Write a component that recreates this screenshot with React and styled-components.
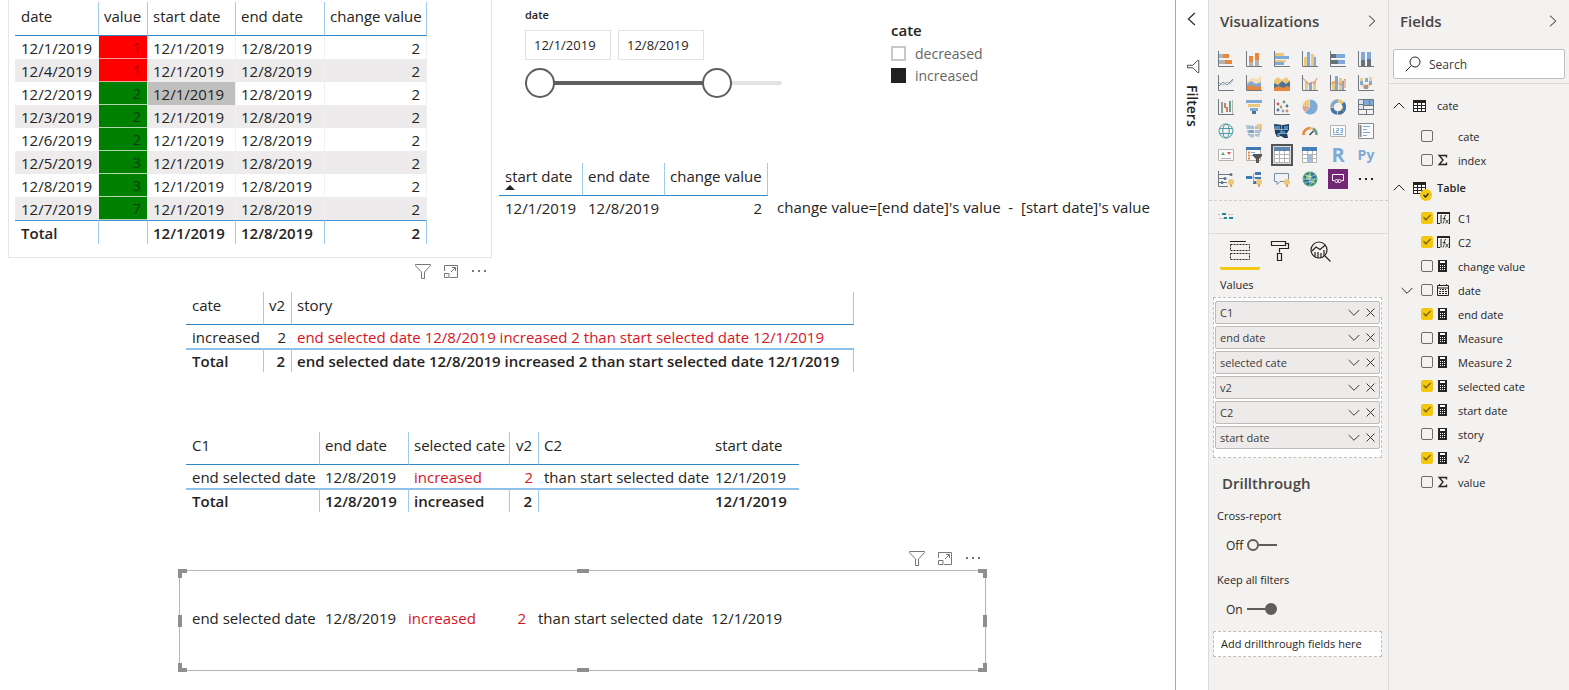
import React, { useState } from "react";
import styled, { createGlobalStyle, css } from "styled-components";

const GlobalStyle = createGlobalStyle`
  *, *::before, *::after { box-sizing: border-box; }
  body { margin: 0; background: #fff; color: #252423; font-family: "Open Sans", "Noto Sans", sans-serif; font-size: 14px; }
  button, input { font: inherit; color: inherit; }
  button { padding: 0; border: 0; background: none; cursor: pointer; }
  h2, h3, p, ul { margin: 0; padding: 0; list-style: none; }
  svg { display: block; }
`;

/* ---------- page frame ---------- */
const Page = styled.div`
  display: flex;
  min-height: 100vh;
`;
const Canvas = styled.main`
  flex: 1;
  min-width: 0;
  display: flex;
  flex-direction: column;
`;
const TopRow = styled.section`
  display: flex;
  padding-left: 8px;
`;
const CardColumn = styled.div`
  flex: none;
  width: 484px;
`;
const Card = styled.div`
  height: 258px;
  padding: 2px 6px 0;
  border: 1px solid #e6e6e6;
  border-top: 0;
`;
const SideColumn = styled.div`
  padding: 8px 0 0 7px;
`;
const Slicers = styled.div`
  display: flex;
  height: 155px;
  padding-left: 26px;
  gap: 109px;
`;
const NoteRow = styled.div`
  display: flex;
  align-items: flex-end;
  gap: 9px;
`;
const Note = styled.p`
  font-size: 15px;
  line-height: 23px;
  white-space: pre;
`;
const Block = styled.section`
  padding: ${(p) => p.$top}px 0 0 186px;
`;

/* ---------- data tables ---------- */
const Table = styled.table`
  table-layout: fixed;
  width: ${(p) => p.$width}px;
  border-collapse: separate;
  border-spacing: 0;
  ${(p) => !p.$plain && css`
    tr > * + * { padding-left: 5px; }
  `}
`;
const HeadCell = styled.th`
  height: ${(p) => p.$h}px;
  padding: 0 6px 6px;
  border-bottom: 1px solid #2f86c9;
  border-right: ${(p) => (p.$open ? 0 : 1)}px solid #9fcbee;
  font-weight: 400;
  font-size: 15px;
  line-height: 18px;
  text-align: ${(p) => (p.$right ? "right" : "left")};
  white-space: nowrap;
`;
const SortMark = styled.span`
  display: block;
  height: 0;
  &::after {
    content: "";
    display: block;
    width: 0;
    border: 5px solid transparent;
    border-top: 0;
    border-bottom-color: #252423;
  }
`;
const tones = {
  red: css`background: #f00; color: #8f0c0c; border-bottom: 1px solid #eda0a0;`,
  green: css`background: #008000; color: #0c3f0c; border-bottom: 1px solid #b0d6b0;`,
  picked: css`background: #bfbfbf;`,
  alert: css`color: #d8141f;`,
};
const Cell = styled.td`
  height: 23px;
  padding: 0 6px;
  border-right: ${(p) => (p.$plain ? 0 : 1)}px solid #f0f0f0;
  font-size: 15px;
  line-height: 20px;
  text-align: ${(p) => (p.$right ? "right" : "left")};
  white-space: nowrap;
  ${(p) => tones[p.$tone]}
`;
const BodyRow = styled.tr`
  background: ${(p) => (p.$shade ? "#edebec" : "transparent")};
`;
const TotalCell = styled(Cell)`
  height: 24px;
  border-top: ${(p) => (p.$thick ? 2 : 1)}px solid ${(p) => (p.$thick ? "#8fc1e8" : "#4a97d6")};
  border-right: ${(p) => (p.$open ? 0 : 1)}px solid #9fcbee;
  font-weight: 600;
`;

function DataTable({ columns, rows, total, striped, headHeight = 33, sorted, thick, plain, label }) {
  const width = columns.reduce((sum, c) => sum + c.width, 0);
  return (
    <Table $width={width} $plain={plain} aria-label={label}>
      <colgroup>
        {columns.map((c, i) => (
          <col key={i} width={c.width} />
        ))}
      </colgroup>
      {!plain && (
        <thead>
          <tr>
            {columns.map((c, i) => (
              <HeadCell key={i} scope="col" $h={headHeight} $right={c.right} $open={c.open}>
                {c.name}
                {sorted === i && <SortMark />}
              </HeadCell>
            ))}
          </tr>
        </thead>
      )}
      <tbody>
        {rows.map((row, r) => (
          <BodyRow key={r} $shade={striped && r % 2 === 1}>
            {row.map((cell, i) => {
              const { text, tone } = typeof cell === "string" ? { text: cell } : cell;
              return (
                <Cell key={i} $right={columns[i].right} $tone={tone} $plain={plain || !striped}>
                  {text}
                </Cell>
              );
            })}
          </BodyRow>
        ))}
      </tbody>
      {total && (
        <tfoot>
          <tr>
            {total.map((text, i) => (
              <TotalCell key={i} $right={columns[i].right} $open={columns[i].open} $thick={thick}>
                {text}
              </TotalCell>
            ))}
          </tr>
        </tfoot>
      )}
    </Table>
  );
}

const mainColumns = [
  { name: "date", width: 84 },
  { name: "value", width: 49, right: true },
  { name: "start date", width: 88 },
  { name: "end date", width: 89 },
  { name: "change value", width: 102, right: true },
];
const mainRows = [
  ["12/1/2019", "1"], ["12/4/2019", "1"], ["12/2/2019", "2"], ["12/3/2019", "2"],
  ["12/6/2019", "2"], ["12/5/2019", "3"], ["12/8/2019", "3"], ["12/7/2019", "7"],
].map(([date, value], i) => [
  date,
  { text: value, tone: value === "1" ? "red" : "green" },
  { text: "12/1/2019", tone: i === 2 ? "picked" : undefined },
  "12/8/2019",
  "2",
]);
const alert = (text) => ({ text, tone: "alert" });

/* ---------- visual toolbar ---------- */
const Toolbar = styled.div`
  display: flex;
  justify-content: flex-end;
  gap: 12px;
  padding-right: 5px;
  height: 16px;
  margin-top: ${(p) => p.$top}px;
  color: #777;
`;
const line = { fill: "none", stroke: "currentColor", strokeWidth: 1 };
const Funnel = () => (
  <svg width="16" height="16" viewBox="0 0 16 16" {...line}><path d="M.5 1.5h15v1.2L9.500 9v6.500H6.500V9L.5 2.700z" /></svg>
);
const Focus = () => (
  <svg width="16" height="16" viewBox="0 0 16 16" {...line}><path d="M1.500 8V2.500h13v12H7M1.500 10.500H6v4H1.500zM8 9l4.500-4.500M9 4.500h3.500V8" /></svg>
);
const Dots = () => (
  <svg width="16" height="16" viewBox="0 0 16 16" fill="currentColor"><path d="M1 7h2v2H1zM7 7h2v2H7zM13 7h2v2h-2z" /></svg>
);
const VisualTools = ({ top }) => (
  <Toolbar $top={top}>
    <button aria-label="Filters"><Funnel /></button>
    <button aria-label="Focus mode"><Focus /></button>
    <button aria-label="More options"><Dots /></button>
  </Toolbar>
);

/* ---------- slicers ---------- */
const DateSlicer = styled.div`
  width: 257px;
`;
const SlicerTitle = styled.h3`
  font-size: 11px;
  font-weight: 600;
  line-height: 14px;
`;
const DateInputs = styled.div`
  display: flex;
  gap: 7px;
  padding-top: 8px;
`;
const DateInput = styled.input`
  width: 86px;
  height: 30px;
  padding: 0 0 0 8px;
  border: 1px solid #e2e2e2;
  font-size: 13px;
`;
const RangeBox = styled.div`
  display: grid;
  height: 30px;
  margin-top: 8px;
  align-items: center;
`;
const RangeTrack = styled.div`
  grid-area: 1 / 1;
  height: 4px;
  border-radius: 2px;
  background: linear-gradient(to right, #605e5c 70%, #e3e3e3 70%);
`;
const Range = styled.input`
  grid-area: 1 / 1;
  appearance: none;
  width: 100%;
  height: 30px;
  margin: 0;
  background: none;
  pointer-events: none;
  &::-webkit-slider-thumb {
    appearance: none;
    width: 30px;
    height: 30px;
    border: 2px solid #605e5c;
    border-radius: 50%;
    background: #fff;
    pointer-events: auto;
  }
`;
const CateSlicer = styled.fieldset`
  margin: 0;
  padding: 10px 0 0;
  border: 0;
`;
const CateLegend = styled.h3`
  font-size: 15px;
  font-weight: 600;
  line-height: 24px;
`;
const CateOption = styled.label`
  display: flex;
  align-items: center;
  gap: 9px;
  height: 22px;
  color: #666;
`;
const SquareBox = styled.input`
  appearance: none;
  width: 15px;
  height: 15px;
  margin: 0;
  border: 2px solid #c8c8c8;
  &:checked { background: #212121; border-color: #212121; }
`;

/* ---------- selected visual ---------- */
const SelectedArea = styled.section`
  width: 807px;
  margin-left: 179px;
`;
const SelectedFrame = styled.div`
  position: relative;
  height: 101px;
  margin-top: 4px;
  padding: 35px 0 0 6px;
  border: 1px solid #b5b5b5;
`;
const Handle = styled.span`
  position: absolute;
  border: 0 solid #8f8f8f;
  ${(p) => ({
    nw: css`left: -2px; top: -2px; width: 9px; height: 9px; border-width: 4px 0 0 4px;`,
    ne: css`right: -2px; top: -2px; width: 9px; height: 9px; border-width: 4px 4px 0 0;`,
    sw: css`left: -2px; bottom: -2px; width: 9px; height: 9px; border-width: 0 0 4px 4px;`,
    se: css`right: -2px; bottom: -2px; width: 9px; height: 9px; border-width: 0 4px 4px 0;`,
    n: css`left: calc(50% - 6px); top: -2px; width: 12px; border-top-width: 4px;`,
    s: css`left: calc(50% - 6px); bottom: -2px; width: 12px; border-top-width: 4px;`,
    w: css`left: -2px; top: calc(50% - 6px); height: 12px; border-left-width: 4px;`,
    e: css`right: -2px; top: calc(50% - 6px); height: 12px; border-left-width: 4px;`,
  })[p.$at]}
`;

/* ---------- side panes ---------- */
const FiltersPane = styled.aside`
  flex: none;
  display: flex;
  flex-direction: column;
  align-items: center;
  width: 33px;
  padding: 12px 1px 0 0;
  border-left: 1px solid #a8a8a8;
`;
const FiltersFunnel = styled.div`
  margin-top: 32px;
  padding-bottom: 4px;
  transform: rotate(90deg);
`;
const FiltersTitle = styled.h2`
  writing-mode: vertical-rl;
  margin-top: 10px;
  font-size: 14px;
  font-weight: 600;
  line-height: 20px;
`;
const Pane = styled.aside`
  flex: none;
  width: ${(p) => p.$width}px;
  border-left: 1px solid #dedcda;
  background: #f3f2f1;
  font-size: 12px;
`;
const PaneHead = styled.header`
  display: flex;
  align-items: center;
  justify-content: space-between;
  height: 42px;
  padding: 0 12px 0 11px;
`;
const PaneTitle = styled.h2`
  font-size: 15px;
  font-weight: 600;
  line-height: 20px;
  color: #484644;
`;
const Chevron = ({ dir, w = 8, h = 12 }) => {
  const d = {
    left: "M7 .7 1.200 6 7 11.300", right: "M1 .7 6.800 6 1 11.300",
    down: "M.7 1 6 6.300 11.300 1", up: "M.7 6.300 6 1l5.300 5.300",
  }[dir];
  const flat = dir === "down" || dir === "up";
  return <svg width={flat ? 12 : w} height={flat ? 7 : h} viewBox={flat ? "0 0 12 7" : "0 0 8 12"} {...line}><path d={d} /></svg>;
};

const IconGrid = styled.div`
  display: grid;
  grid-template-columns: repeat(6, 28px);
  grid-auto-rows: 24px;
  padding: 5px 0 9px 3px;
  border-bottom: 1px dashed #d0cecc;
`;
const VizButton = styled.button`
  display: flex;
  align-items: center;
  justify-content: center;
  ${(p) => p.$active && css`
    width: 22px;
    height: 22px;
    place-self: center;
    border: 2px solid #555;
    background: #dcdcdc;
  `}
`;
const CustomRow = styled.div`
  height: 33px;
  padding: 7px 0 0 9px;
  border-bottom: 1px solid #dedcda;
`;

const O = "#e8873a", Y = "#edc77a", B = "#7fa9d6", G = "#8a8886", D = "#4d7396", GR = "#b5b3b1";
const Axis = () => <path d="M.5 0v15.500H16" fill="none" stroke="#6f7780" />;
const R = ({ x, y, w, h, f }) => <rect x={x} y={y} width={w} height={h} fill={f} />;
const vizIcons = [
  ["Stacked bar chart", <><R x={1} y={3} w={4} h={4} f={GR} /><R x={5} y={3} w={6} h={4} f={O} /><R x={1} y={9} w={6} h={4} f={GR} /><R x={7} y={9} w={7} h={4} f={O} /><Axis /></>],
  ["Stacked column chart", <><R x={3} y={5} w={4} h={7} f={O} /><R x={3} y={11} w={4} h={4} f={GR} /><R x={9} y={2} w={4} h={8} f={O} /><R x={9} y={9} w={4} h={6} f={GR} /><Axis /></>],
  ["Clustered bar chart", <><R x={1} y={2} w={9} h={3} f={Y} /><R x={1} y={5} w={14} h={3} f={B} /><R x={1} y={9} w={11} h={2} f={Y} /><R x={1} y={11} w={9} h={3} f={B} /><Axis /></>],
  ["Clustered column chart", <><R x={2} y={6} w={3} h={9} f={Y} /><R x={5} y={1} w={3} h={14} f={B} /><R x={9} y={3} w={3} h={12} f={Y} /><R x={12} y={6} w={2} h={9} f={B} /><Axis /></>],
  ["100% stacked bar chart", <><R x={1} y={3} w={5} h={4} f="#66717a" /><R x={6} y={3} w={9} h={4} f={B} /><R x={1} y={9} w={7} h={4} f="#66717a" /><R x={8} y={9} w={7} h={4} f={B} /><Axis /></>],
  ["100% stacked column chart", <><R x={3} y={1} w={4} h={9} f={B} /><R x={3} y={9} w={4} h={6} f="#66717a" /><R x={9} y={1} w={4} h={8} f={B} /><R x={9} y={8} w={4} h={7} f="#66717a" /><Axis /></>],
  ["Line chart", <><path d="M1 11l4-4 4 3 6-6" fill="none" stroke="#7c8893" /><path d="M1 8l4 2 4-3 3 2 3-4" fill="none" stroke="#9fb5c9" /><Axis /></>],
  ["Area chart", <><path d="M1 6l5-3 5 1 4-3v9H1z" fill="#f4dcb8" /><path d="M1 9l4-3 5 3 5-2v5H1z" fill={B} /><path d="M1 11l4-1 5 2 5-1v4H1z" fill={O} /><Axis /></>],
  ["Stacked area chart", <><path d="M0 5l4-3 4 3 4-3 4 4v6H0z" fill={Y} /><path d="M0 8l4 2 4-4 4 3 4-3v7H0z" fill={D} /><path d="M0 13l5-2 4 2 4-2 3 1v4H0z" fill={O} /></>],
  ["Line and stacked column chart", <><R x={3} y={6} w={3} h={9} f={Y} /><R x={7} y={8} w={3} h={7} f={B} /><R x={11} y={6} w={3} h={9} f={Y} /><path d="M1 3l5 6 4-2 2 2 3-6" fill="none" stroke="#dd8a68" /><Axis /></>],
  ["Line and clustered column chart", <><R x={2} y={6} w={3} h={9} f={Y} /><R x={5} y={1} w={3} h={14} f={B} /><R x={9} y={3} w={3} h={12} f={Y} /><R x={12} y={6} w={2} h={9} f={B} /><path d="M1 9l5-3 5 4 4-6v9" fill="none" stroke="#dd8a68" /><Axis /></>],
  ["Ribbon chart", <><path d="M2 3h3v5l3 2 3-2V2h3v6l-4 6H6L2 9z" fill={Y} opacity=".8" /><R x={2} y={6} w={3} h={4} f={B} /><R x={7} y={3} w={3} h={4} f={B} /><R x={11} y={6} w={3} h={4} f={B} /><R x={6} y={10} w={4} h={4} f="#a78fa0" /><Axis /></>],
  ["Waterfall chart", <><R x={3} y={3} w={2} h={11} f="#7fa693" /><R x={6} y={4} w={2} h={5} f="#d9756a" /><R x={8} y={8} w={2} h={5} f="#d9756a" /><R x={11} y={2} w={2} h={11} f="#6d9f86" /><R x={14} y={1} w={1} h={14} f={GR} /><Axis /></>],
  ["Funnel chart", <><R x={0} y={1} w={16} h={3} f={B} /><R x={2} y={5} w={12} h={3} f={Y} /><R x={4} y={9} w={8} h={3} f={B} /><R x={6} y={12} w={4} h={3} f={D} /></>],
  ["Scatter chart", <>{[[4, 5, "#c8605a"], [10, 3, "#5f9f80"], [7, 8, "#b0986a"], [13, 7, D], [4, 11, D], [9, 12, B], [13, 12, "#d98a50"]].map(([x, y, f], i) => <circle key={i} cx={x} cy={y} r="1.400" fill={f} />)}<Axis /></>],
  ["Pie chart", <><path d="M8 8V.5A7.500 7.500 0 1 1 3 13.500z" fill={B} /><path d="M7.500 8V.5A7.500 7.500 0 0 0 .8 6z" fill={Y} /><path d="M7.500 8L.6 6.500A7.500 7.500 0 0 0 3 13z" fill="#dd9f92" /></>],
  ["Donut chart", <g fill="none" strokeWidth="3.500"><circle cx="8" cy="8" r="6" stroke={Y} /><path d="M8 2a6 6 0 0 0-6 6" stroke={B} /><path d="M2 9a6 6 0 0 0 5 5M13 4a6 6 0 0 1 0 8" stroke="#3f78b5" /><path d="M13 12a6 6 0 0 1-5 2" stroke={D} /></g>],
  ["Treemap", <><R x={1} y={1} w={5} h={9} f="#dfe5ea" /><R x={6} y={1} w={9} h={6} f={B} /><path d="M.5.5h15v15H.5zM.5 5.500h5M.5 10.500h15M5.500.5v10M5.500 6.500h10M11.500 1v6M8.500 10.500v5" fill="none" stroke="#6f7780" /></>],
  ["Map", <g fill="none" stroke="#4f9aa5"><circle cx="8" cy="8" r="7" /><ellipse cx="8" cy="8" rx="3.200" ry="7" /><path d="M1.500 5.500h13M1.500 10.500h13" /></g>],
  ["Filled map", <><path d="M0 2l9 1 5-1 2 5-2 3-1 4-4-1-3 2-4-3z" fill="#a9bfd2" /><path d="M3 7h5v3H3z" fill="#7fa0bf" /><path d="M11 1h5v5l-4 1z" fill={Y} /><path d="M1 6.500h12M8.500 3v10M3 10.500h9" fill="none" stroke="#f3f2f1" /></>],
  ["Shape map", <><path d="M0 1l9 1 6-1v6l-2 3 1 5h-4l-3-2-4 1-2-4z" fill="#1f3f5f" /><path d="M1 3h5v3H1zM10 3h4v3h-4zM6 8h5v2H6zM3 11h3v2H3z" fill="#4a88c4" /><path d="M0 6.500h14M7.500 2v6M4 10.500h9" stroke="#d6e2ee" strokeWidth=".6" /></>],
  ["Gauge", <g fill="none" strokeWidth="2.600"><path d="M1.500 12A6.600 6.600 0 0 1 8 5" stroke={O} /><path d="M8 5a6.600 6.600 0 0 1 3 1" stroke={Y} /><path d="M11 5.700A6.600 6.600 0 0 1 14.500 12" stroke="#6d9f86" /><path d="M7.500 12l4-4" stroke="#444" strokeWidth="1.500" /></g>],
  ["Card", <><path d="M.5 2.500h15v11H.5z" fill="#fafafa" stroke={GR} /><path d="M3.500 5v4M3 9.500h2M6.500 5.500h2v2h-2v2h2.500M10.500 5.500h2v4h-2M10.500 7.500h2M3 11.500h10" fill="none" stroke={B} /></>],
  ["Multi-row card", <><path d="M.5.500h15v15H.5z" fill="#fafafa" stroke="#85898c" /><path d="M2.500 2v12" stroke={G} strokeWidth="2" /><path d="M5 3.500h7M5 6.500h4M5 9.500h7M5 12.500h4" stroke={B} /></>],
  ["KPI", <><path d="M.5 2.500h15v11H.5z" fill="#fafafa" stroke={GR} /><path d="M3 8l2-3 2 3z" fill="#5f9f80" /><path d="M9 5h4l-2 3z" fill="#c8605a" /><path d="M3 11.500h10" stroke={GR} /></>],
  ["Slicer", <><path d="M.5.5h14v13H.5z" fill="#fafafa" stroke={GR} /><R x={0} y={0} w={15} h={3} f="#3f78b5" /><path d="M2 5.500h2M2 8.500h2M2 11.500h2" stroke={O} strokeWidth="2" /><path d="M5 5.500h4M5 8.500h3" stroke={B} /><path d="M7 7h9v2l-3 3v4h-3v-4L7 9z" fill="#555" /></>],
  ["Table", <><path d="M.5.5h15v15H.5z" fill="#fff" stroke={GR} /><R x={0} y={0} w={16} h={4} f="#5f86b0" /><path d="M5.500 4v12M10.500 4v12M0 7.500h16M0 11.500h16" stroke={GR} /></>],
  ["Matrix", <><path d="M.5.5h14v15H.5z" fill="#fff" stroke={GR} /><R x={0} y={0} w={15} h={4} f="#4a7fb5" /><R x={5} y={8} w={6} h={7} f="#9fc0e0" /><path d="M5.500 4v12M10.500 4v12M0 7.500h15M0 11.500h15" stroke={GR} /></>],
];
const Letter = styled.span`
  color: ${B};
  font-weight: 700;
  font-size: ${(p) => p.$size}px;
  line-height: 20px;
`;
const Bulb = () => <><circle cx="13" cy="11" r="3" fill={Y} /><R x={12} y={13} w={2} h={3} f="#d9a860" /></>;
const lastIcons = [
  ["Key influencers", <><path d="M.5 0v15.500H10M1 3.500h12M1 7.500h6M1 11.500h8" fill="none" stroke="#6f7780" /><circle cx="13" cy="3.500" r="1.500" fill={D} /><circle cx="7" cy="7.500" r="1.500" fill={D} /><circle cx="4" cy="11.500" r="1.500" fill={D} /><Bulb /></>],
  ["Decomposition tree", <><R x={0} y={5} w={6} h={3} f="#3f78b5" /><R x={9} y={1} w={6} h={3} f="#3f78b5" /><R x={9} y={6} w={6} h={2} f="#3f78b5" /><R x={7} y={10} w={4} h={3} f="#3f78b5" /><path d="M6 6.500h3M7.500 2.500v9" fill="none" stroke={B} /><Bulb /></>],
  ["Q&A", <><path d="M.5 2.500h14v8H6l-3 3v-3H.5z" fill="none" stroke="#7390ad" /><Bulb /></>],
  ["ArcGIS maps", <><circle cx="8" cy="8" r="7.500" fill="#4f9f7a" /><circle cx="8" cy="8" r="6" fill="#2a6d9a" /><path d="M4 4l4-1 2 3-3 3-3-1zM9 9l4-1-1 4-3 1z" fill="#8cc07a" /><path d="M1 8h14M8 1v14M3 4c4 2 6 2 10 0M3 12c4-2 6-2 10 0" fill="none" stroke="#dcefe6" strokeWidth=".7" /></>],
];
const PowerApps = styled.span`
  display: flex;
  align-items: center;
  justify-content: center;
  width: 20px;
  height: 20px;
  background: #742774;
`;
const Icon16 = ({ children }) => <svg width="16" height="16" viewBox="0 0 16 16">{children}</svg>;

const Tabs = styled.div`
  display: flex;
  height: 36px;
  padding: 6px 0 0 11px;
`;
const Tab = styled.button`
  display: flex;
  justify-content: center;
  align-items: flex-start;
  width: 40px;
  padding-top: 1px;
  border-bottom: 3px solid ${(p) => (p.$active ? "#f2c811" : "transparent")};
  border-radius: 2px;
`;
const WellTitle = styled.h3`
  padding: 6px 0 4px 11px;
  font-size: 11px;
  font-weight: 400;
  line-height: 17px;
`;
const Well = styled.ul`
  display: flex;
  flex-direction: column;
  gap: 2px;
  margin: 0 6px 0 4px;
  padding: 3px 1px 8px;
  border: 1px dashed #c0bebc;
  background: #fff;
`;
const WellItem = styled.li`
  display: flex;
  align-items: center;
  gap: 6px;
  height: 23px;
  padding: 0 4px;
  border: 1px solid #bebbb8;
  border-radius: 2px;
  background: #edebe9;
  font-size: 11px;
  color: #3b3a39;
`;
const WellName = styled.span`
  flex: 1;
`;
const DrillTitle = styled(PaneTitle)`
  padding: 15px 0 0 13px;
`;
const DrillLabel = styled.h3`
  padding: ${(p) => p.$top}px 0 0 8px;
  font-size: 11px;
  font-weight: 400;
  line-height: 16px;
`;
const SwitchRow = styled.label`
  display: flex;
  align-items: center;
  gap: 4px;
  height: 16px;
  margin: 13px 0 0 17px;
  font-size: 12px;
`;
const Switch = styled.input`
  appearance: none;
  display: flex;
  align-items: center;
  width: 30px;
  height: 12px;
  margin: 0;
  &::before {
    content: "";
    flex: none;
    width: 12px;
    height: 12px;
    border: 2px solid #605e5c;
    border-radius: 50%;
  }
  &::after {
    content: "";
    flex: 1;
    height: 2px;
    background: #605e5c;
  }
  &:checked { flex-direction: row-reverse; }
  &:checked::before { background: #605e5c; }
`;
const DropBox = styled.div`
  margin: 14px 6px 0 4px;
  padding: 0 7px;
  border: 1px dashed #c0bebc;
  background: #fff;
  font-size: 11px;
  line-height: 24px;
`;

/* ---------- fields pane ---------- */
const SearchBar = styled.label`
  display: flex;
  align-items: center;
  gap: 8px;
  height: 30px;
  margin: 7px 4px 4px;
  padding: 0 11px;
  border: 1px solid #c1bfbd;
  border-radius: 2px;
  background: #fff;
`;
const SearchInput = styled.input`
  flex: 1;
  min-width: 0;
  padding: 0;
  border: 0;
  outline: 0;
  background: none;
  font-size: 12px;
  &::placeholder { color: #3b3a39; opacity: 1; }
`;
const Tree = styled.div`
  padding-top: 6px;
  border-top: 1px solid #dedcda;
`;
const Group = styled.button`
  display: flex;
  align-items: center;
  gap: 8px;
  width: 100%;
  height: 34px;
  padding: 0 0 3px 4px;
  font-size: 11px;
  font-weight: ${(p) => (p.$bold ? 600 : 400)};
  text-align: left;
`;
const GroupIcon = styled.span`
  position: relative;
  width: 16px;
`;
const Badge = styled.span`
  position: absolute;
  left: 7px;
  top: 7px;
`;
const FieldRow = styled.li`
  display: grid;
  grid-template-columns: 12px 12px 12px 1fr;
  column-gap: 8px;
  align-items: center;
  height: 24px;
  padding-left: 12px;
`;
const FieldLabel = styled.label`
  grid-column: 2 / -1;
  display: grid;
  grid-template-columns: 12px 14px 1fr;
  column-gap: 4px;
  align-items: center;
  font-size: 11px;
`;
const FieldName = styled.span`
  padding-left: 3px;
  white-space: nowrap;
`;
const Check = styled.input`
  appearance: none;
  display: flex;
  justify-content: center;
  width: 12px;
  height: 12px;
  margin: 0;
  border: 1px solid #6f6d6b;
  border-radius: 2px;
  &:checked { border-color: #f2c811; background: #f2c811; }
  &:checked::after {
    content: "";
    width: 4px;
    height: 7px;
    border: solid #5c4a00;
    border-width: 0 1px 1px 0;
    transform: rotate(45deg);
  }
`;
const GridIcon = () => (
  <svg width="13" height="12" viewBox="0 0 13 12"><path d="M0 0h13v12H0z" fill="#252423" /><path d="M1 3h3v2H1zM5 3h3v2H5zM9 3h3v2H9zM1 6h3v2H1zM5 6h3v2H5zM9 6h3v2H9zM1 9h3v2H1zM5 9h3v2H5zM9 9h3v2H9z" fill="#fff" /></svg>
);
const fieldIcons = {
  sum: <svg width="12" height="12" viewBox="0 0 12 12" fill="none" stroke="#252423" strokeWidth="1.400"><path d="M9.500 3.500V1.500H2.200L6 6 2.200 10.500h7.300v-2" /></svg>,
  calc: <svg width="12" height="12" viewBox="0 0 12 12"><path d="M1 0h9v12H1z" fill="#252423" /><path d="M3 1h5v2H3zM3 5h1v1H3zM5 5h1v1H5zM7 5h1v1H7zM3 7h1v1H3zM5 7h1v1H5zM7 7h1v1H7zM3 9h1v1H3zM5 9h1v1H5zM7 9h1v1H7z" fill="#fff" /></svg>,
  fx: <svg width="13" height="12" viewBox="0 0 13 12" fill="none" stroke="#252423"><path d="M.5 0v12M12.500 0v12M4 3v8.500M0 11.500h3" /><path d="M0 1h13" strokeWidth="2" /><path d="M9 3.500H8L6.500 11H5.500M5.500 6.500h3M8.500 7.500l3 4M11.500 7.500l-3 4" strokeWidth=".8" /></svg>,
  date: <svg width="12" height="12" viewBox="0 0 12 12"><path d="M.5 1.500h11v10H.5zM.5 4h11" fill="none" stroke="#252423" /><path d="M2 0h1v2H2zM9 0h1v2H9zM3 5h1v1H3zM5 5h2v1H5zM8 5h1v1H8zM2 7h2v1H2zM5 7h2v1H5zM8 7h2v1H8zM2 9h2v1H2zM5 9h2v1H5zM8 9h2v1H8z" fill="#252423" /></svg>,
};
const tableFields = [
  ["C1", "fx", true], ["C2", "fx", true], ["change value", "calc"], ["date", "date"],
  ["end date", "calc", true], ["Measure", "calc"], ["Measure 2", "calc"], ["selected cate", "calc", true],
  ["start date", "calc", true], ["story", "calc"], ["v2", "calc", true], ["value", "sum"],
];

function Field({ name, icon, checked, expandable }) {
  return (
    <FieldRow>
      {expandable ? <button aria-label={`Expand ${name}`}><Chevron dir="down" /></button> : <span />}
      <FieldLabel>
        <Check type="checkbox" defaultChecked={checked} />
        {fieldIcons[icon] || <span />}
        <FieldName>{name}</FieldName>
      </FieldLabel>
    </FieldRow>
  );
}

export default function App() {
  const [from, setFrom] = useState(0);
  const [to, setTo] = useState(7);
  return (
    <Page>
      <GlobalStyle />
      <Canvas>
        <TopRow>
          <CardColumn>
            <Card>
              <DataTable label="Values by date" columns={mainColumns} rows={mainRows} striped headHeight={34}
                total={["Total", "", "12/1/2019", "12/8/2019", "2"]} />
            </Card>
            <VisualTools top={5} />
          </CardColumn>
          <SideColumn>
            <Slicers>
              <DateSlicer>
                <SlicerTitle>date</SlicerTitle>
                <DateInputs>
                  <DateInput aria-label="Start date" value={`12/${from + 1}/2019`} readOnly />
                  <DateInput aria-label="End date" value={`12/${to + 1}/2019`} readOnly />
                </DateInputs>
                <RangeBox>
                  <RangeTrack />
                  <Range type="range" aria-label="From" min="0" max="9" value={from} onChange={(e) => setFrom(Math.min(+e.target.value, to))} />
                  <Range type="range" aria-label="To" min="0" max="9" value={to} onChange={(e) => setTo(Math.max(+e.target.value, from))} />
                </RangeBox>
              </DateSlicer>
              <CateSlicer aria-label="cate">
                <CateLegend>cate</CateLegend>
                <CateOption><SquareBox type="checkbox" />decreased</CateOption>
                <CateOption><SquareBox type="checkbox" defaultChecked />increased</CateOption>
              </CateSlicer>
            </Slicers>
            <NoteRow>
              <DataTable label="Change value" sorted={0}
                columns={[{ name: "start date", width: 84 }, { name: "end date", width: 82 }, { name: "change value", width: 103, right: true }]}
                rows={[["12/1/2019", "12/8/2019", "2"]]} />
              <Note>{"change value=[end date]'s value  -  [start date]'s value"}</Note>
            </NoteRow>
          </SideColumn>
        </TopRow>

        <Block $top={13}>
          <DataTable label="Story" thick
            columns={[{ name: "cate", width: 78 }, { name: "v2", width: 28, right: true }, { name: "story", width: 562 }]}
            rows={[["increased", "2", alert("end selected date 12/8/2019 increased 2 than start selected date 12/1/2019")]]}
            total={["Total", "2", "end selected date 12/8/2019 increased 2 than start selected date 12/1/2019"]} />
        </Block>
        <Block $top={60}>
          <DataTable label="Story parts" thick
            columns={[{ name: "C1", width: 134 }, { name: "end date", width: 89 }, { name: "selected cate", width: 101 },
              { name: "v2", width: 29, right: true }, { name: "C2", width: 171, open: true }, { name: "start date", width: 89, open: true }]}
            rows={[["end selected date", "12/8/2019", alert("increased"), alert("2"), "than start selected date", "12/1/2019"]]}
            total={["Total", "12/8/2019", "increased", "2", "", "12/1/2019"]} />
        </Block>

        <SelectedArea>
          <VisualTools top={38} />
          <SelectedFrame>
            <DataTable label="Sentence" plain
              columns={[{ width: 133 }, { width: 83 }, { width: 101 }, { width: 29, right: true }, { width: 173 }, { width: 90 }]}
              rows={[["end selected date", "12/8/2019", alert("increased"), alert("2"), "than start selected date", "12/1/2019"]]} />
            {["nw", "n", "ne", "w", "e", "sw", "s", "se"].map((at) => <Handle key={at} $at={at} />)}
          </SelectedFrame>
        </SelectedArea>
      </Canvas>

      <FiltersPane>
        <button aria-label="Expand filters"><Chevron dir="left" w={9} h={14} /></button>
        <FiltersFunnel><svg width="13" height="13" viewBox="0 0 16 16" {...line}><path d="M.5 1.500h15v1.200L9.500 9v6.500H6.500V9L.5 2.700z" /></svg></FiltersFunnel>
        <FiltersTitle>Filters</FiltersTitle>
      </FiltersPane>

      <Pane $width={180}>
        <PaneHead>
          <PaneTitle>Visualizations</PaneTitle>
          <button aria-label="Collapse visualizations"><Chevron dir="right" /></button>
        </PaneHead>
        <IconGrid>
          {vizIcons.map(([name, art]) => (
            <VizButton key={name} aria-label={name} $active={name === "Table"}><Icon16>{art}</Icon16></VizButton>
          ))}
          <VizButton><Letter $size={20}>R</Letter></VizButton>
          <VizButton><Letter $size={14}>Py</Letter></VizButton>
          {lastIcons.map(([name, art]) => (
            <VizButton key={name} aria-label={name}><Icon16>{art}</Icon16></VizButton>
          ))}
          <VizButton aria-label="Power Apps">
            <PowerApps>
              <svg width="12" height="10" viewBox="0 0 12 10" fill="none" stroke="#fff"><path d="M2 6.500H.5v-6h11v6H10" /><path d="M2.500 7l2-2 2 2-2 2zM5.500 7l2-2 2 2-2 2z" /></svg>
            </PowerApps>
          </VizButton>
          <VizButton aria-label="More visuals"><Dots /></VizButton>
        </IconGrid>
        <CustomRow>
          <button aria-label="Custom visual">
            <svg width="16" height="16" viewBox="0 0 16 16"><path d="M0 6.500h3M10 6.500h5M1 10.500h9" stroke="#e0a8a8" strokeDasharray="2 1" /><path d="M4 6h4M11 10h4M6 10h3" stroke="#1f8a9c" strokeWidth="2" /></svg>
          </button>
        </CustomRow>
        <Tabs>
          <Tab $active aria-label="Fields">
            <svg width="22" height="20" viewBox="0 0 22 20" fill="none" stroke="#252423"><path d="M1 .5h16" /><path d="M1.500 3.500h19v6h-19zM1.500 12.500h19v6h-19z" strokeDasharray="2 1" /></svg>
          </Tab>
          <Tab aria-label="Format">
            <svg width="20" height="20" viewBox="0 0 20 20" fill="none" stroke="#252423"><path d="M1.500.5h14v4h-14zM15.500 2.500h3v5h-9v4M7.500 12.500h4v7h-4z" strokeWidth="1.200" /></svg>
          </Tab>
          <Tab aria-label="Analytics">
            <svg width="21" height="21" viewBox="0 0 21 21" fill="none" stroke="#252423" strokeWidth="1.200"><circle cx="9" cy="9" r="8" /><path d="M15 15l5.500 5.500M2 10l4-4 4 2.500L15.500 4M5 16v-5M8 17v-6M11 17v-5M14 15v-6" /></svg>
          </Tab>
        </Tabs>
        <WellTitle>Values</WellTitle>
        <Well>
          {["C1", "end date", "selected cate", "v2", "C2", "start date"].map((name) => (
            <WellItem key={name}>
              <WellName>{name}</WellName>
              <button aria-label={`Options for ${name}`}><Chevron dir="down" /></button>
              <button aria-label={`Remove ${name}`}>
                <svg width="9" height="9" viewBox="0 0 9 9" {...line}><path d="M.5.5l8 8M8.500.5l-8 8" /></svg>
              </button>
            </WellItem>
          ))}
        </Well>
        <DrillTitle>Drillthrough</DrillTitle>
        <DrillLabel $top={15}>Cross-report</DrillLabel>
        <SwitchRow>Off<Switch type="checkbox" role="switch" aria-label="Cross-report" /></SwitchRow>
        <DrillLabel $top={19}>Keep all filters</DrillLabel>
        <SwitchRow>On<Switch type="checkbox" role="switch" aria-label="Keep all filters" defaultChecked /></SwitchRow>
        <DropBox>Add drillthrough fields here</DropBox>
      </Pane>

      <Pane $width={181}>
        <PaneHead>
          <PaneTitle>Fields</PaneTitle>
          <button aria-label="Collapse fields"><Chevron dir="right" /></button>
        </PaneHead>
        <SearchBar>
          <svg width="16" height="16" viewBox="0 0 16 16" {...line}><circle cx="10" cy="6" r="5" /><path d="M6.300 9.700L.7 15.300" /></svg>
          <SearchInput type="search" placeholder="Search" aria-label="Search" />
        </SearchBar>
        <Tree>
          <Group><Chevron dir="up" /><GroupIcon><GridIcon /></GroupIcon>cate</Group>
          <ul>
            <Field name="cate" />
            <Field name="index" icon="sum" />
          </ul>
          <Group $bold>
            <Chevron dir="up" />
            <GroupIcon>
              <GridIcon />
              <Badge><svg width="12" height="12" viewBox="0 0 12 12"><circle cx="6" cy="6" r="6" fill="#f2c811" /><path d="M3.500 6l2 2 3-3.500" fill="none" stroke="#252423" strokeWidth="1.300" /></svg></Badge>
            </GroupIcon>
            Table
          </Group>
          <ul>
            {tableFields.map(([name, icon, checked]) => (
              <Field key={name} name={name} icon={icon} checked={checked} expandable={name === "date"} />
            ))}
          </ul>
        </Tree>
      </Pane>
    </Page>
  );
}
